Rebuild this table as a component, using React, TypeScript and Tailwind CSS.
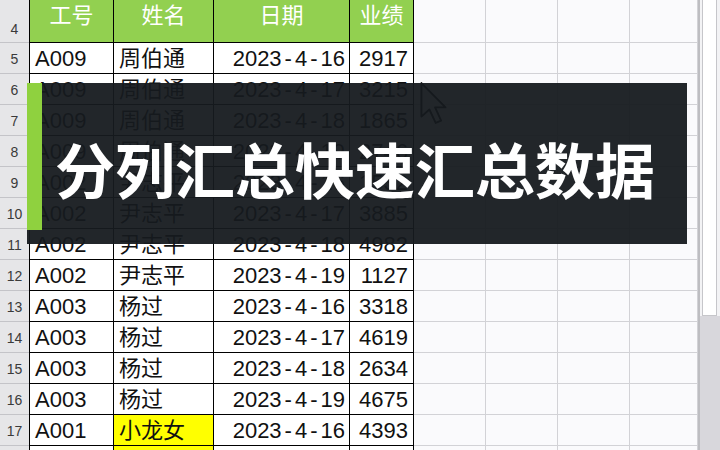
const rows = [
  { n: 5, id: 'A009', name: '周伯通', date: '2023-4-16', score: '2917' },
  { n: 6, id: 'A009', name: '周伯通', date: '2023-4-17', score: '3215' },
  { n: 7, id: 'A009', name: '周伯通', date: '2023-4-18', score: '1865' },
  { n: 8, id: 'A009', name: '周伯通', date: '2023-4-19', score: '2746' },
  { n: 9, id: 'A002', name: '尹志平', date: '2023-4-16', score: '1532' },
  { n: 10, id: 'A002', name: '尹志平', date: '2023-4-17', score: '3885' },
  { n: 11, id: 'A002', name: '尹志平', date: '2023-4-18', score: '4982' },
  { n: 12, id: 'A002', name: '尹志平', date: '2023-4-19', score: '1127' },
  { n: 13, id: 'A003', name: '杨过', date: '2023-4-16', score: '3318' },
  { n: 14, id: 'A003', name: '杨过', date: '2023-4-17', score: '4619' },
  { n: 15, id: 'A003', name: '杨过', date: '2023-4-18', score: '2634' },
  { n: 16, id: 'A003', name: '杨过', date: '2023-4-19', score: '4675' },
  { n: 17, id: 'A001', name: '小龙女', date: '2023-4-16', score: '4393', mark: true },
  { n: 18, id: 'A001', name: '小龙女', date: '2023-4-17', score: '2851', mark: true },
];

function DateText({ v }: { v: string }) {
  const parts = v.split('-');
  return (
    <span>
      {parts.map((p, i) => (
        <span key={i}>
          {i > 0 && <span className="mx-[3px]">-</span>}
          {p}
        </span>
      ))}
    </span>
  );
}

function EmptyCells() {
  return (
    <>
      <div className="w-[72px] h-full border-r border-b border-[#d2d2d6]" />
      <div className="w-[72px] h-full border-r border-b border-[#d2d2d6]" />
      <div className="w-[72px] h-full border-r border-b border-[#d2d2d6]" />
      <div className="w-[68px] h-full border-r border-b border-[#d2d2d6]" />
    </>
  );
}

export default function App() {
  return (
    <div className="relative w-[720px] h-[450px] overflow-hidden bg-[#fafafc] flex font-['Liberation_Sans','Noto_Sans_CJK_SC',sans-serif] text-[#111]">
      {/* sheet */}
      <div className="w-[698px] flex flex-col">
        {/* header row 4 */}
        <div className="flex h-[43px] shrink-0">
          <div className="w-[29px] h-full bg-[#e6e6e8] border-b border-[#c4c4c8] flex items-end justify-center pb-[2px] text-[14px] text-[#3a3a3a]">
            4
          </div>
          <div className="w-[85px] h-full bg-[#92d050] border-l border-r border-b border-black flex justify-center text-white text-[22px] leading-[32px]">
            工号
          </div>
          <div className="w-[100px] h-full bg-[#92d050] border-r border-b border-black flex justify-center text-white text-[22px] leading-[32px]">
            姓名
          </div>
          <div className="w-[136px] h-full bg-[#92d050] border-r border-b border-black flex justify-center text-white text-[22px] leading-[32px]">
            日期
          </div>
          <div className="w-[64px] h-full bg-[#92d050] border-r border-b border-black flex justify-center text-white text-[22px] leading-[32px]">
            业绩
          </div>
          <EmptyCells />
        </div>

        {rows.map((r) => (
          <div key={r.n} className="flex h-[31px] shrink-0">
            <div className="w-[29px] h-full bg-[#e6e6e8] border-b border-[#c4c4c8] flex items-end justify-center pb-[3px] text-[14px] text-[#3a3a3a]">
              {r.n}
            </div>
            <div className="w-[85px] h-full bg-white border-l border-r border-b border-black flex items-end pl-[5px] text-[22px] leading-[28px]">
              {r.id}
            </div>
            <div
              className={`w-[100px] h-full border-r border-b border-black flex items-end pl-[5px] text-[22px] leading-[28px] ${
                r.mark ? 'bg-[#ffff00]' : 'bg-white'
              }`}
            >
              {r.name}
            </div>
            <div className="w-[136px] h-full bg-white border-r border-b border-black flex items-end justify-end pr-[4px] text-[22px] leading-[28px]">
              <DateText v={r.date} />
            </div>
            <div className="w-[64px] h-full bg-white border-r border-b border-black flex items-end justify-end pr-[5px] text-[22px] leading-[28px]">
              {r.score}
            </div>
            <EmptyCells />
          </div>
        ))}
      </div>

      {/* scrollbar */}
      <div className="w-[22px] h-full flex flex-col border-l-2 border-[#bdbdc1]">
        <div className="h-[316px] bg-[#f3f3f5] pl-[2px] pr-[3px]">
          <div className="h-full bg-white border border-[#c6c6ca] border-t-0" />
        </div>
        <div className="flex-1 bg-[#d8d7dc]" />
      </div>

      {/* mouse pointer, sits under the banner */}
      <svg className="absolute left-[419px] top-[81px]" width="30" height="44" viewBox="0 0 14 21">
        <path
          d="M1 1 L1 17 L4.8 13.6 L7.8 20 L10.4 18.9 L7.5 12.6 L12.5 12.6 Z"
          fill="#ffffff"
          stroke="#000000"
          strokeWidth="0.9"
          strokeLinejoin="round"
        />
      </svg>

      {/* title banner */}
      <div className="absolute left-[27px] top-[83px] w-[660px] h-[161px] bg-[#161a1f]/95 flex items-start">
        <div className="w-[15px] h-[147px] bg-[#8fd13f] shrink-0" />
        <div className="flex-1 h-full flex items-center pl-[13px] pt-[8px] text-white text-[60px] leading-none font-bold font-['Noto_Sans_CJK_SC',sans-serif]">
          分列汇总快速汇总数据
        </div>
      </div>
    </div>
  );
}
